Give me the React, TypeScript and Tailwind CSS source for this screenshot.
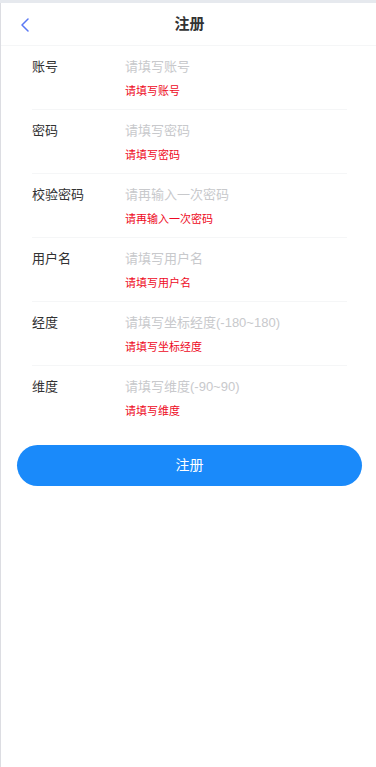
import React from "react";

const rows = [
  { label: "账号", ph: "请填写账号", err: "请填写账号" },
  { label: "密码", ph: "请填写密码", err: "请填写密码" },
  { label: "校验密码", ph: "请再输入一次密码", err: "请再输入一次密码" },
  { label: "用户名", ph: "请填写用户名", err: "请填写用户名" },
  { label: "经度", ph: "请填写坐标经度(-180~180)", err: "请填写坐标经度" },
  { label: "维度", ph: "请填写维度(-90~90)", err: "请填写维度" },
];

export default function App() {
  return (
    <div
      className="h-[767px] w-full overflow-hidden bg-white"
      style={{ fontFamily: '"Liberation Sans", "Noto Sans CJK SC", sans-serif' }}
    >
      <div className="h-[3px] w-full bg-[#e6e9ee]" />
      <div className="flex h-[764px] w-full">
        <div className="w-px shrink-0 bg-[#dcdde2]" />
        <div className="w-[377px] shrink-0 bg-white">
          <div className="relative flex h-[43px] items-center justify-center border-b border-[#f5f6f7]">
            <svg
              className="absolute left-[19px] top-[15px]"
              width="10"
              height="14"
              viewBox="0 0 10 14"
              fill="none"
            >
              <polyline
                points="8,1 2,7 8,13"
                stroke="#5a78f4"
                strokeWidth="1.5"
                strokeLinecap="round"
                strokeLinejoin="round"
              />
            </svg>
            <span className="text-[15px] font-bold text-[#323233]">注册</span>
          </div>
          <div className="ml-[31px] mr-[31px]">
            {rows.map((r, i) => (
              <div
                key={r.label}
                className={`flex h-[64px] pt-[9px] ${
                  i < rows.length - 1 ? "border-b border-[#f5f6f7]" : ""
                }`}
              >
                <div className="w-[93px] shrink-0 text-[13px] leading-[24px] text-[#323233]">
                  {r.label}
                </div>
                <div className="flex flex-col">
                  <div className="text-[13px] leading-[24px] text-[#c8c9cc]">{r.ph}</div>
                  <div className="mt-[3px] text-[11px] leading-[18px] text-[#ee0a24]">{r.err}</div>
                </div>
              </div>
            ))}
          </div>
          <div className="mx-4 mt-[15px]">
            <button className="flex h-[41px] w-full items-center justify-center rounded-full bg-[#1a8afa] text-[14px] text-white">
              注册
            </button>
          </div>
        </div>
      </div>
    </div>
  );
}
